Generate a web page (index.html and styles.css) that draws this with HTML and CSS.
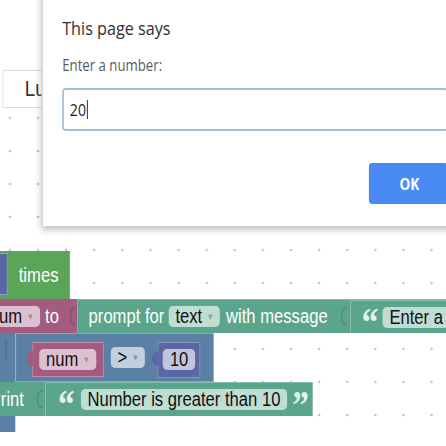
FILE: index.html
```html
<!DOCTYPE html>
<html lang="en">
<head>
    <meta charset="UTF-8">
    <meta name="viewport" content="width=device-width, initial-scale=1.0">
    <title>Blockly - prompt</title>
    <link rel="stylesheet" href="styles.css">
</head>
<body>

    <div class="screen">
        <div class="topbar">
            <div class="search">Lu</div>
        </div>

        <div class="workspace">
            <div class="stack">
                <!-- repeat N times -->
                <div class="repeat-head">
                    <div class="num-slot"></div>
                    <span class="label">times</span>
                </div>

                <!-- set num to prompt -->
                <div class="set-row">
                    <div class="set-block">
                        <span class="field field-var">num <span class="arrow">▾</span></span>
                        <span class="label to">to</span>
                        <span class="notch"></span>
                    </div>
                    <div class="prompt-block">
                        <span class="label">prompt for</span>
                        <span class="field field-text">text <span class="arrow">▾</span></span>
                        <span class="label with">with message</span>
                        <span class="notch"></span>
                        <div class="text-block">
                            <span class="quote">“</span>
                            <span class="field field-str">Enter a number:</span>
                        </div>
                    </div>
                </div>

                <!-- if num > 10 -->
                <div class="if-row">
                    <div class="if-arm"><span class="notch"></span></div>
                    <div class="compare">
                        <div class="var-block">
                            <span class="field field-var">num <span class="arrow">▾</span></span>
                        </div>
                        <span class="field field-op">&gt; <span class="arrow">▾</span></span>
                        <div class="math-block">
                            <span class="field field-num">10</span>
                        </div>
                    </div>
                </div>

                <!-- print "..." -->
                <div class="print-row">
                    <span class="label print">Print</span>
                    <span class="notch"></span>
                    <div class="text-block">
                        <span class="quote">“</span>
                        <span class="field field-str">Number is greater than 10</span>
                        <span class="quote close">”</span>
                    </div>
                </div>

                <div class="if-foot"></div>
            </div>
        </div>

        <!-- browser prompt() dialog -->
        <div class="dialog">
            <div class="dialog-title">This page says</div>
            <div class="dialog-msg">Enter a number:</div>
            <div class="dialog-input">20<span class="caret"></span></div>
            <div class="dialog-actions">
                <button type="button" class="ok-btn">OK</button>
            </div>
        </div>
    </div>

</body>
</html>
```

FILE: styles.css
```css
body {
    margin: 0;
    width: 446px;
    height: 446px;
    overflow: hidden;
    background: #fff;
    font-family: "Liberation Sans", Arial, sans-serif;
}

/* the capture is squeezed horizontally, so draw at natural width and squeeze */
.screen {
    position: relative;
    width: 524px;
    height: 446px;
    overflow: hidden;
    transform: scaleX(0.852);
    transform-origin: 0 0;
}

.topbar {
    height: 108px;
    padding: 70px 0 0 3px;
    box-sizing: border-box;
}

.search {
    width: 90px;
    height: 38px;
    box-sizing: border-box;
    border: 1px solid #dcdcdc;
    padding-left: 25px;
    font-size: 22px;
    line-height: 36px;
    color: #333;
}

.workspace {
    height: 338px;
    box-sizing: border-box;
    padding-top: 143px;
    background-image: radial-gradient(circle at 11.7px 10px, #c4c4c4 0, #c4c4c4 1px, transparent 1.7px);
    background-size: 33px 33px;
}

.stack {
    display: flex;
    flex-direction: column;
    align-items: flex-start;
}

/* block text */
.label {
    color: #fff;
    font-size: 19.5px;
    white-space: nowrap;
}

.field {
    display: flex;
    align-items: center;
    gap: 7px;
    height: 21px;
    padding: 0 8px;
    border-radius: 5px;
    background: rgba(255, 255, 255, 0.62);
    color: #111;
    font-size: 19.5px;
    line-height: 21px;
    white-space: nowrap;
    flex: none;
}

.arrow {
    font-size: 11px;
    color: rgba(0, 0, 0, 0.28);
}

.notch {
    flex: none;
    width: 5px;
    height: 15px;
    border: 2px solid rgba(0, 0, 0, 0.13);
    border-right: none;
    border-radius: 8px 0 0 8px;
}

.quote {
    font-family: "Liberation Serif", serif;
    font-weight: bold;
    font-size: 39px;
    line-height: 31px;
    height: 21px;
    color: #e4f1eb;
    flex: none;
}

.text-block {
    display: flex;
    align-items: center;
    align-self: stretch;
    border-left: 1px solid rgba(255, 255, 255, 0.35);
    border-top: 1px solid rgba(255, 255, 255, 0.25);
}

/* repeat */
.repeat-head {
    display: flex;
    align-items: center;
    width: 82px;
    height: 48px;
    background: #5ba55b;
}

.num-slot {
    align-self: flex-start;
    margin-top: 2px;
    width: 8px;
    height: 40px;
    background: #5b67a5;
    border: 1px solid rgba(255, 255, 255, 0.35);
    border-left: none;
}

.repeat-head .label {
    margin-left: 13px;
}

/* set num to prompt */
.set-row {
    display: flex;
    width: 100%;
    height: 34px;
}

.set-block {
    display: flex;
    align-items: center;
    flex: none;
    width: 91px;
    background: #a55b80;
}

.set-block .field {
    margin-left: -20px;
}

.set-block .to {
    margin: 0 13px 0 6px;
}

.prompt-block {
    display: flex;
    align-items: center;
    flex: 1;
    padding-left: 13px;
    background: #5ba58c;
    border-top: 1px solid rgba(255, 255, 255, 0.25);
}

.field-text {
    margin: 0 7px 0 5px;
}

.prompt-block .with {
    margin-right: 15px;
}

.prompt-block .text-block {
    margin-left: 4px;
    padding-left: 13px;
    flex: 1;
}

.prompt-block .quote {
    margin-right: 5px;
}

/* if num > 10 */
.if-row {
    display: flex;
    height: 49px;
}

.if-arm {
    width: 18px;
    background: #5b80a5;
    padding: 8px 0 0 6px;
    box-sizing: border-box;
}

.compare {
    display: flex;
    align-items: center;
    width: 233px;
    box-sizing: border-box;
    padding-left: 19px;
    background: #5b80a5;
    border: 1px solid rgba(255, 255, 255, 0.3);
}

.var-block,
.math-block {
    position: relative;
    display: flex;
    align-items: center;
    background: #a55b80;
    border: 1px solid rgba(255, 255, 255, 0.3);
    box-sizing: border-box;
}

.var-block::before,
.math-block::before {
    content: '';
    position: absolute;
    left: -8px;
    top: 8px;
    width: 8px;
    height: 15px;
    background: inherit;
    border-radius: 8px 0 0 8px;
}

.var-block {
    width: 84px;
    height: 35px;
    margin-top: 4px;
    padding-left: 7px;
}

.field-op {
    margin-left: 8px;
}

.math-block {
    width: 50px;
    height: 36px;
    margin: 4px 0 0 15px;
    padding-left: 5px;
    background: #5b67a5;
}

/* print */
.print-row {
    display: flex;
    align-items: center;
    width: 367px;
    height: 34px;
    background: #5ba58c;
}

.print-row .print {
    margin: 0 15px 0 -12px;
}

.print-row .text-block {
    margin-left: 3px;
    padding-left: 14px;
    flex: 1;
}

.print-row .field-str {
    margin: 0 6px 0 7px;
}

.if-foot {
    width: 18px;
    height: 16px;
    background: #5b80a5;
}

/* prompt dialog */
.dialog {
    position: absolute;
    left: 49px;
    top: -8px;
    width: 501px;
    height: 234px;
    box-sizing: border-box;
    padding: 0 24px 0 23px;
    background: #fff;
    border-left: 1px solid #bdbdbd;
    box-shadow: 0 3px 8px rgba(0, 0, 0, 0.3);
    font-family: "Open Sans", "Noto Sans", sans-serif;
}

.dialog-title {
    margin-top: 24px;
    font-size: 19px;
    line-height: 24px;
    color: #303030;
}

.dialog-msg {
    margin-top: 15px;
    font-size: 15.5px;
    line-height: 20px;
    color: #5a5a5a;
}

.dialog-input {
    display: flex;
    align-items: center;
    margin-top: 13px;
    height: 43px;
    box-sizing: border-box;
    padding-left: 7px;
    border: 2px solid #a6bddc;
    border-radius: 4px;
    font-size: 16.5px;
    color: #202124;
}

.caret {
    width: 1px;
    height: 19px;
    margin-left: 1px;
    background: #111;
}

.dialog-actions {
    display: flex;
    justify-content: flex-end;
    margin-top: 32px;
}

.ok-btn {
    width: 93px;
    height: 41px;
    border: none;
    border-radius: 4px;
    background: #4a8af4;
    color: #fff;
    font-family: "Open Sans", "Noto Sans", sans-serif;
    font-weight: bold;
    font-size: 16px;
    padding-right: 4px;
}
```
